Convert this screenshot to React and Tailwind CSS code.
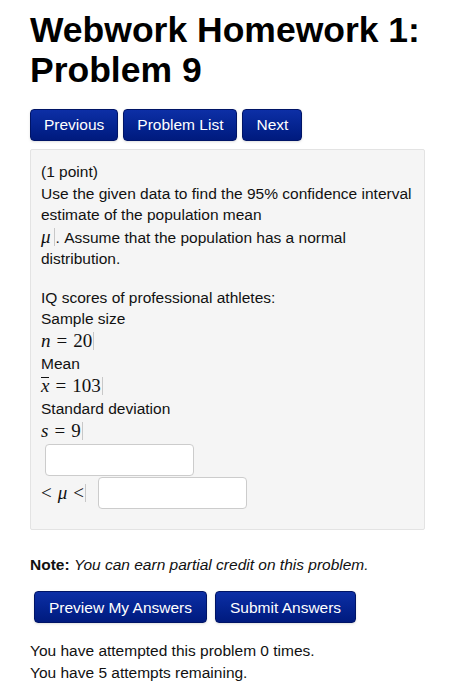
import React from "react";

const btn =
  "h-8 rounded-[4px] text-white text-[15.5px] bg-gradient-to-b from-[#0d2fa6] to-[#001a7e] border border-[#001466] shadow-sm flex items-center";

function Caret() {
  return <span className="inline-block w-px h-[18px] bg-[#c8c8c8] align-[-3px] ml-px" />;
}

function M({ children }) {
  return <span className="font-['Liberation_Serif',serif] text-[19px]">{children}</span>;
}

function Eq() {
  return <span className="mx-[6px]">=</span>;
}

export default function App() {
  return (
    <div className="w-[455px] h-[700px] bg-white font-['Liberation_Sans',Arial,sans-serif] text-[#111] overflow-hidden">
      <div className="pl-[30px] pr-[30px]">
        <h1 className="pt-[10px] text-[35.5px] leading-[40px] font-bold text-black">
          Webwork Homework 1:
          <br />
          Problem 9
        </h1>

        <div className="flex gap-[5px] mt-[19px]">
          <button className={btn + " px-[13px]"}>Previous</button>
          <button className={btn + " px-[13px]"}>Problem List</button>
          <button className={btn + " px-[13px]"}>Next</button>
        </div>

        <div className="mt-[8px] w-[395px] h-[381px] bg-[#f5f5f5] border border-[#e3e3e3] rounded-[2px] px-[10px] pt-[11px] text-[15.5px] leading-[21.5px]">
          <div>(1 point)</div>
          <div>Use the given data to find the 95% confidence interval estimate of the population mean</div>
          <div>
            <M><i className="pr-[2px]">μ</i></M>
            <Caret />
            <span className="ml-px">. Assume that the population has a normal distribution.</span>
          </div>
          <div className="h-[17px]" />
          <div>IQ scores of professional athletes:</div>
          <div>Sample size</div>
          <div>
            <M><i>n</i><Eq />20</M>
            <Caret />
          </div>
          <div className="mt-[1px]">Mean</div>
          <div>
            <M>
              <i className="inline-block leading-[15px] border-t border-[#111]">x</i>
              <Eq />103
            </M>
            <Caret />
          </div>
          <div className="mt-[1px]">Standard deviation</div>
          <div>
            <M><i>s</i><Eq />9</M>
            <Caret />
          </div>
          <div className="mt-[2px] ml-[4px] w-[149px] h-[32px] bg-white border border-[#cccccc] rounded-[4px]" />
          <div className="flex items-center mt-[1px]">
            <M>&lt;<span className="mx-[6px]"><i>μ</i></span>&lt;</M>
            <Caret />
            <div className="ml-[12px] w-[149px] h-[32px] bg-white border border-[#cccccc] rounded-[4px]" />
          </div>
        </div>

        <div className="mt-[23px] text-[15.5px]">
          <b>Note:</b> <i>You can earn partial credit on this problem.</i>
        </div>

        <div className="flex gap-[8px] mt-[15px] ml-[4px]">
          <button className={btn + " px-[14px]"}>Preview My Answers</button>
          <button className={btn + " px-[14px]"}>Submit Answers</button>
        </div>

        <div className="mt-[17px] text-[15.5px] leading-[21.5px]">
          <div>You have attempted this problem 0 times.</div>
          <div>You have 5 attempts remaining.</div>
        </div>
      </div>
    </div>
  );
}
